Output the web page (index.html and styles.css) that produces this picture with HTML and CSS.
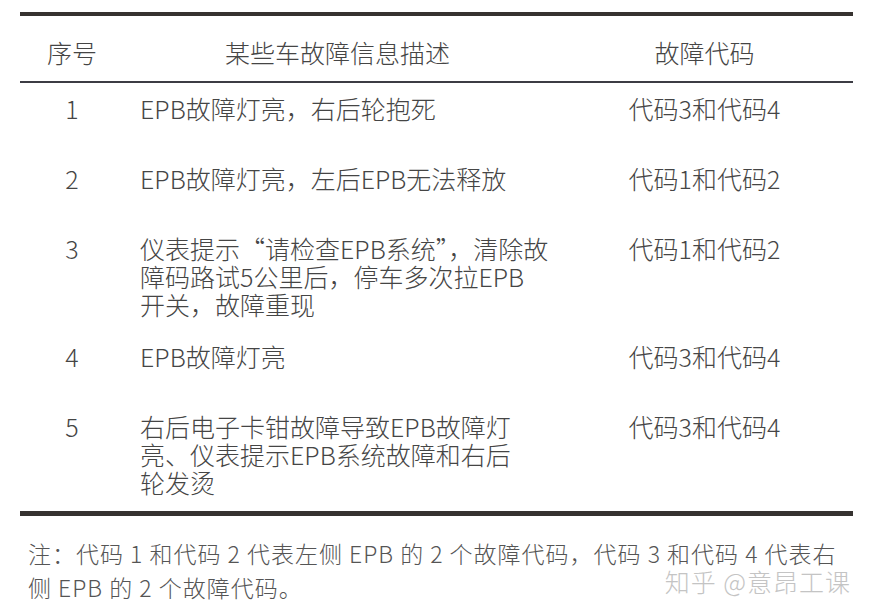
FILE: index.html
```html
<!DOCTYPE html>
<html lang="zh-CN">
<head>
<meta charset="utf-8">
<title>EPB故障代码</title>
<link rel="stylesheet" href="styles.css">
</head>
<body>
<div class="page">
  <div class="table">
    <div class="row head">
      <div class="c-no">序号</div>
      <div class="c-desc">某些车故障信息描述</div>
      <div class="c-code">故障代码</div>
    </div>
    <div class="row">
      <div class="c-no">1</div>
      <div class="c-desc">EPB故障灯亮，右后轮抱死</div>
      <div class="c-code">代码3和代码4</div>
    </div>
    <div class="row">
      <div class="c-no">2</div>
      <div class="c-desc">EPB故障灯亮，左后EPB无法释放</div>
      <div class="c-code">代码1和代码2</div>
    </div>
    <div class="row">
      <div class="c-no">3</div>
      <div class="c-desc">仪表提示“请检查EPB系统”，清除故<br>障码路试5公里后，停车多次拉EPB<br>开关，故障重现</div>
      <div class="c-code">代码1和代码2</div>
    </div>
    <div class="row">
      <div class="c-no">4</div>
      <div class="c-desc">EPB故障灯亮</div>
      <div class="c-code">代码3和代码4</div>
    </div>
    <div class="row last">
      <div class="c-no">5</div>
      <div class="c-desc">右后电子卡钳故障导致EPB故障灯<br>亮、仪表提示EPB系统故障和右后<br>轮发烫</div>
      <div class="c-code">代码3和代码4</div>
    </div>
  </div>
  <div class="note">
    <p class="note-text">注：代码 1 和代码 2 代表左侧 EPB 的 2 个故障代码，代码 3 和代码 4 代表右<br>侧 EPB 的 2 个故障代码。</p>
    <span class="watermark">知乎 @意昂工课</span>
  </div>
</div>
</body>
</html>
```
FILE: styles.css
```css
html, body {
  margin: 0;
  padding: 0;
  background: #ffffff;
}
body {
  font-family: "Noto Sans CJK SC", "Noto Sans", sans-serif;
  color: #454545;
}
.page {
  width: 871px;
  height: 608px;
  padding: 12px 18px 0 20px;
  box-sizing: border-box;
  position: relative;
}
.table {
  border-top: 4px solid #363230;
  border-bottom: 5px solid #363230;
}
.row {
  display: grid;
  grid-template-columns: 104px 450px 1fr;
  min-height: 70px;
  box-sizing: border-box;
  padding: 11px 0 13px;
  font-size: 25px;
  line-height: 28px;
  font-weight: 300;
}
.row.head {
  height: 67px;
  padding: 22px 0 0;
  border-bottom: 2px solid #3c3c44;
  min-height: 0;
}
.row.last {
  padding-bottom: 15px;
}
.c-no {
  text-align: center;
}
.c-desc {
  white-space: nowrap;
  padding-left: 16px;
}
.head .c-desc {
  padding-left: 101px;
}
.c-code {
  text-align: center;
  padding-right: 18px;
}
.note {
  position: relative;
}
.note-text {
  margin: 0;
  padding: 20px 0 0 8px;
  font-size: 23px;
  line-height: 34px;
  letter-spacing: 1px;
  font-weight: 300;
  color: #555;
  white-space: nowrap;
}
.watermark {
  position: absolute;
  right: 2px;
  top: 47px;
  font-size: 25px;
  font-weight: 300;
  color: #c4c4c4;
  letter-spacing: 1px;
}
```
